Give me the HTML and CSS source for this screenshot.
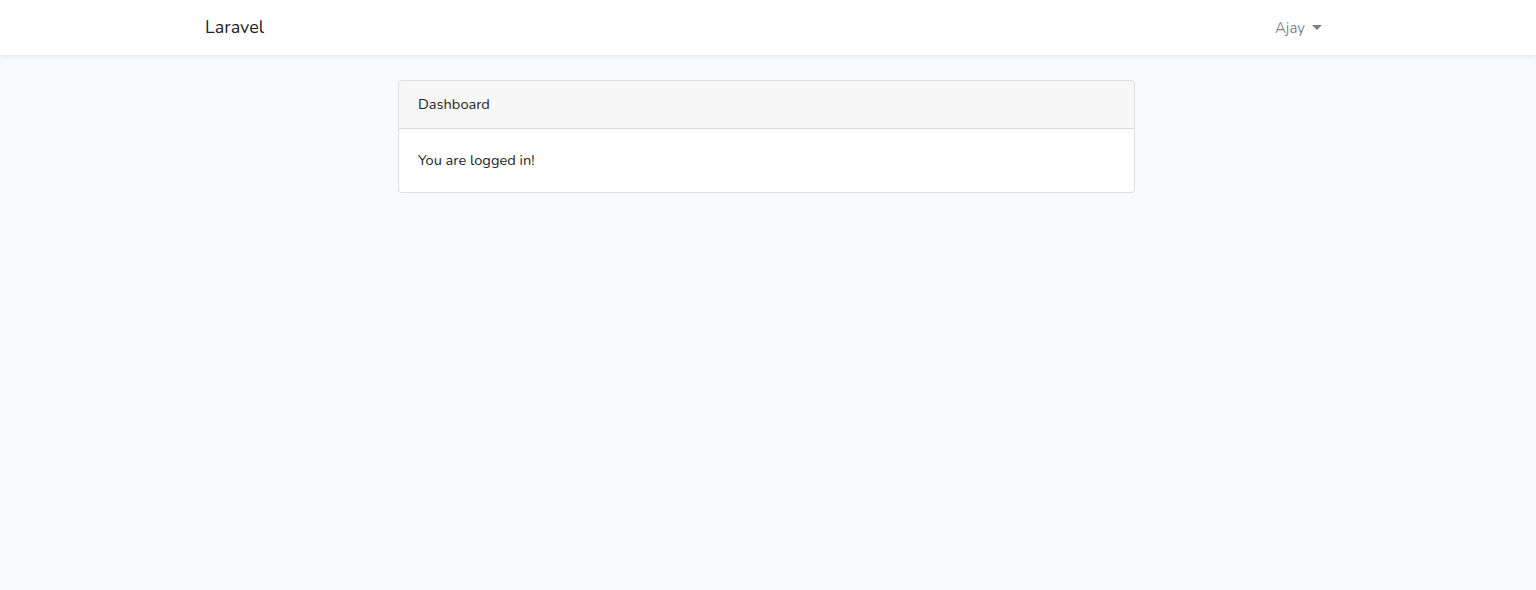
FILE: index.html
```html
<!DOCTYPE html>
<html>
<head>
    <title>Laravel</title>
    <link rel="stylesheet" href="styles.css">
</head>
<body>
    <div class="app">

        <nav class="navbar">
            <div class="container navbar-inner">
                <a class="navbar-brand" href="#">Laravel</a>
                <ul class="navbar-nav">
                    <li class="nav-item">
                        <a class="nav-link dropdown-toggle" href="#">Ajay</a>
                    </li>
                </ul>
            </div>
        </nav>

        <main class="main">
            <div class="container">
                <div class="row">
                    <div class="col-8">
                        <div class="card">
                            <div class="card-header">Dashboard</div>
                            <div class="card-body">
                                You are logged in!
                            </div>
                        </div>
                    </div>
                </div>
            </div>
        </main>

    </div>
</body>
</html>
```

FILE: styles.css
```css
html, body
{
    margin: 0;
    padding: 0;
}

body
{
    background-color: #f8fafc;
    color: #212529;
    font-family: Nunito, Lato, "Noto Sans", sans-serif;
    font-size: 14.6px;
    line-height: 1.6;
    min-height: 590px;
}

a
{
    text-decoration: none;
}

.main
{
    padding-top: 25px;
    padding-right: 3px;
}

.container
{
    box-sizing: border-box;
    width: 1150px;
    margin: 0 auto;
    padding: 0 15px;
}

.navbar
{
    background-color: #fff;
    height: 55px;
    box-shadow: 0 2px 4px rgba(0, 0, 0, 0.075);
    position: relative;
}

.navbar-inner
{
    display: flex;
    align-items: center;
    justify-content: space-between;
    height: 100%;
}

.navbar-brand
{
    color: rgba(0, 0, 0, 0.9);
    font-size: 18px;
    line-height: 1;
    padding-bottom: 2px;
    margin-left: -3px;
}

.navbar-nav
{
    list-style: none;
    margin: 0;
    padding: 0;
    display: flex;
}

.nav-link
{
    color: rgba(0, 0, 0, 0.5);
    font-size: 15px;
    padding: 8px 6px 8px 7px;
    display: block;
}

.dropdown-toggle::after
{
    content: "";
    display: inline-block;
    margin-left: 7px;
    vertical-align: 3px;
    border-top: 5px solid;
    border-right: 5px solid transparent;
    border-left: 5px solid transparent;
    border-bottom: 0;
}

.row
{
    display: flex;
    justify-content: center;
    margin: 0 -15px;
}

.col-8
{
    box-sizing: border-box;
    width: 767px;
    padding: 0 15px;
}

.card
{
    background-color: #fff;
    border: 1px solid rgba(0, 0, 0, 0.125);
    border-radius: 4px;
    overflow: hidden;
}

.card-header
{
    background-color: rgba(0, 0, 0, 0.03);
    border-bottom: 1px solid rgba(0, 0, 0, 0.125);
    padding: 0 19px;
    height: 47px;
    line-height: 46px;
}

.card-body
{
    padding: 0 19px;
    height: 63px;
    line-height: 62px;
}
```
